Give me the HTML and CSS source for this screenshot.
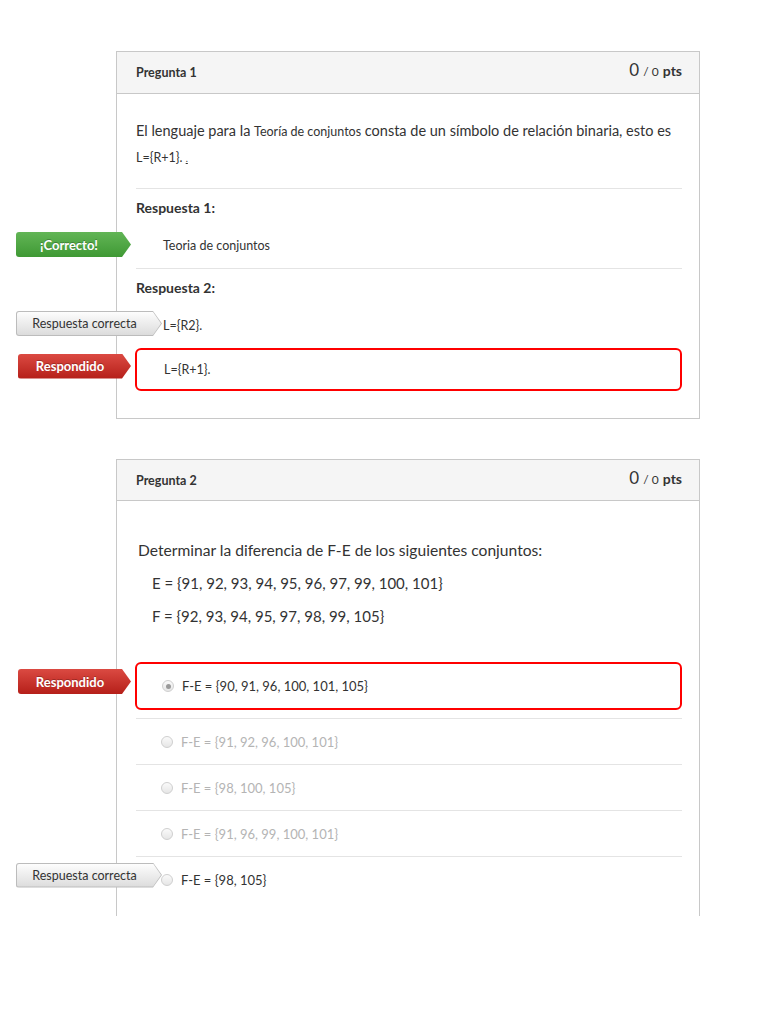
FILE: index.html
```html
<!DOCTYPE html>
<html>
<head>
  <title>Resultados del examen</title>
  <link rel="stylesheet" href="styles.css">
</head>
<body>
  <div class="quiz">

    <div class="question">
      <div class="question-header">
        <span class="question-name">Pregunta 1</span>
        <span class="question-points"><span class="score">0</span> <span class="out-of">/ 0</span> <span class="pts">pts</span></span>
      </div>
      <div class="question-body">
        <p class="question-text">El lenguaje para la <span class="small-text">Teoría de conjuntos</span> consta de un símbolo de relación binaria, esto es <span class="small-text">L={R+1}. <span class="tiny">.</span></span></p>

        <div class="answer-group">
          <div class="group-title">Respuesta 1:</div>
          <div class="answer first">
            <span class="tag tag-correct">¡Correcto!</span>
            Teoria de conjuntos
          </div>
        </div>

        <div class="answer-group">
          <div class="group-title">Respuesta 2:</div>
          <div class="answer first">
            <span class="tag tag-right">Respuesta correcta</span>
            L={R2}.
          </div>
          <div class="answer selected">
            <span class="tag tag-answered">Respondido</span>
            L={R+1}.
          </div>
        </div>
      </div>
    </div>

    <div class="question open-end">
      <div class="question-header">
        <span class="question-name">Pregunta 2</span>
        <span class="question-points"><span class="score">0</span> <span class="out-of">/ 0</span> <span class="pts">pts</span></span>
      </div>
      <div class="question-body">
        <p class="set-text set-title">Determinar la diferencia de F-E de los siguientes conjuntos:</p>
        <p class="set-text set-line">E = {91, 92, 93, 94, 95, 96, 97, 99, 100, 101}</p>
        <p class="set-text set-line">F = {92, 93, 94, 95, 97, 98, 99, 105}</p>

        <div class="options">
          <div class="option selected">
            <span class="tag tag-answered">Respondido</span>
            <span class="radio checked"></span>
            F-E = {90, 91, 96, 100, 101, 105}
          </div>
          <div class="option muted">
            <span class="radio"></span>
            F-E = {91, 92, 96, 100, 101}
          </div>
          <div class="option muted">
            <span class="radio"></span>
            F-E = {98, 100, 105}
          </div>
          <div class="option muted">
            <span class="radio"></span>
            F-E = {91, 96, 99, 100, 101}
          </div>
          <div class="option">
            <span class="tag tag-right">Respuesta correcta</span>
            <span class="radio"></span>
            F-E = {98, 105}
          </div>
        </div>
      </div>
    </div>

  </div>
</body>
</html>
```

FILE: styles.css
```css
* {
  box-sizing: border-box;
}
body {
  margin: 0;
  background-color: #fff;
  color: #333;
  font-family: Lato, "Liberation Sans", Arial, sans-serif;
}
.quiz {
  width: 584px;
  margin: 51px 0 0 116px;
}
.question {
  border: 1px solid #c8c8c8;
  margin-bottom: 40px;
}
.question.open-end {
  border-bottom: none;
  margin-bottom: 0;
}
.question-header {
  display: flex;
  justify-content: space-between;
  height: 42px;
  padding: 0 17px 0 19px;
  background-color: #f5f5f5;
  border-bottom: 1px solid #c8c8c8;
}
.open-end .question-header {
  height: 41px;
}
.question-name {
  align-self: center;
  font-size: 12.5px;
  font-weight: 700;
  color: #333;
}
.question-points {
  padding-top: 7px;
  color: #333;
}
.score {
  font-size: 17px;
}
.out-of {
  font-size: 12px;
}
.pts {
  font-size: 14px;
  font-weight: 700;
}
.question-body {
  padding: 24px 17px 27px 19px;
}
.open-end .question-body {
  padding: 37px 17px 14px 19px;
}
.question-text {
  margin: 0 0 18px;
  font-size: 14.5px;
  line-height: 26px;
}
.small-text {
  font-size: 12.5px;
  line-height: 16px;
}
.tiny {
  font-size: 9px;
  text-decoration: underline;
}
.answer-group {
  border-top: 1px solid #e4e4e4;
}
.group-title {
  padding-top: 9px;
  font-size: 14px;
  font-weight: 700;
  line-height: 20px;
}
.answer {
  position: relative;
  display: flex;
  align-items: center;
  height: 46px;
  padding-left: 27px;
  font-size: 12.5px;
}
.answer.first {
  margin-top: 4px;
}
.answer.selected {
  height: 43px;
  padding-left: 27px;
  margin-left: -1px;
  border: 2px solid #f00;
  border-radius: 6px;
}

/* question 2 */
.set-text {
  margin: 0;
  font-size: 15px;
  line-height: 24px;
}
.set-title {
  margin-left: 2px;
  font-size: 15.6px;
}
.set-line {
  margin: 9px 0 0 16px;
}
.options {
  margin-top: 34px;
}
.option {
  position: relative;
  display: flex;
  align-items: center;
  height: 46px;
  padding-left: 25px;
  font-size: 13px;
  color: #333;
  border-top: 1px solid #e4e4e4;
}
.option.selected {
  height: 48px;
  margin: 0 0 8px -1px;
  border: 2px solid #f00;
  border-radius: 6px;
  padding-left: 25px;
}
.option.muted {
  color: #b4b4b4;
}
.radio {
  width: 12px;
  height: 12px;
  margin-right: 8px;
  border: 1px solid #cfcfcf;
  border-radius: 50%;
  background: linear-gradient(#fafafa, #e6e6e6);
  display: flex;
  align-items: center;
  justify-content: center;
}
.radio.checked::after {
  content: "";
  width: 5px;
  height: 5px;
  border-radius: 50%;
  background-color: #9a9a9a;
}

/* arrow tags over the left border */
.tag {
  position: absolute;
  top: calc(50% - 15px);
  left: -120px;
  height: 25px;
  padding-right: 9px;
  display: flex;
  align-items: center;
  justify-content: center;
  font-size: 13px;
  font-weight: 700;
  color: #fff;
  text-shadow: 0 -1px 0 rgba(0, 0, 0, 0.25);
  border-radius: 3px 0 0 3px;
  clip-path: polygon(0 0, calc(100% - 9px) 0, 100% 50%, calc(100% - 9px) 100%, 0 100%);
}
.tag-correct {
  width: 115px;
  top: calc(50% - 13px);
  background: linear-gradient(#62b556, #3f9934);
}
.tag-answered {
  width: 113px;
  left: -118px;
  background: linear-gradient(#db4a42, #b51f19);
}
.selected .tag-answered {
  left: -119px;
  top: calc(50% - 16px);
}
.option.selected .tag-answered {
  top: calc(50% - 17px);
}
.tag-right {
  width: 146px;
  top: calc(50% - 14px);
  font-size: 12.5px;
  font-weight: 400;
  color: #333;
  text-shadow: none;
  background: #bcbcbc;
  z-index: 0;
}
.tag-right::before {
  content: "";
  position: absolute;
  inset: 1px;
  z-index: -1;
  border-radius: 2px 0 0 2px;
  background: linear-gradient(#fdfdfd, #dcdcdc);
  clip-path: polygon(0 0, calc(100% - 8px) 0, 100% 50%, calc(100% - 8px) 100%, 0 100%);
}
.option .tag-right {
  left: -120px;
  top: calc(50% - 17px);
}
```
